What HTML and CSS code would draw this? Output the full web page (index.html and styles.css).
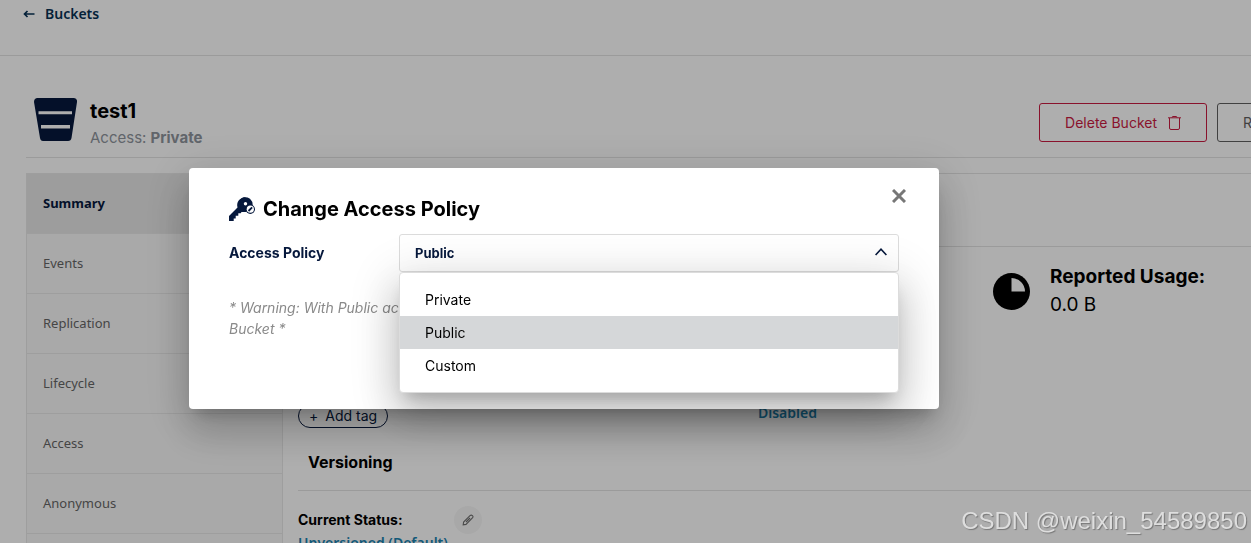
FILE: index.html
```html
<!DOCTYPE html>
<html lang="en">
<head>
  <meta charset="UTF-8" />
  <meta name="viewport" content="width=device-width, initial-scale=1.0" />
  <title>test1 - Buckets</title>
  <link rel="stylesheet" href="styles.css">
</head>
<body>
  <header class="topbar">
    <a class="back-link" href="#">
      <svg width="12" height="8" viewBox="0 0 12 8" fill="none" stroke="currentColor" stroke-width="1.7"><path d="M11.5 4H1.5M4.5 1L1.5 4l3 3"/></svg>
      Buckets
    </a>
  </header>

  <main class="content">
    <div class="bucket-head">
      <svg class="bucket-icon" width="43" height="43" viewBox="0 0 43 43">
        <path fill="#06183c" fill-rule="evenodd" d="M3 0H40Q43.500 .5 43 4L37.500 40Q37 43 34 43H9Q6.500 43 6 40L0 4Q0 .5 3 0ZM4.500 13.300V16.300H38V13.300ZM7 27V30.500H36V27Z"/>
      </svg>
      <div class="bucket-info">
        <h1>test1</h1>
        <p>Access: <strong>Private</strong></p>
      </div>
      <div class="actions">
        <button class="btn btn-danger" type="button">Delete Bucket
          <svg width="13" height="14" viewBox="0 0 13 14" fill="none" stroke="currentColor"><path d="M0 1.800H13M4 1.500Q4 .5 5 .5H8Q9 .5 9 1.500M1.500 2V12Q1.500 13.500 3 13.500H10Q11.500 13.500 11.500 12V2"/></svg>
        </button>
        <button class="btn btn-refresh" type="button">Refresh</button>
      </div>
    </div>

    <div class="layout">
      <nav class="tabs">
        <a class="active" href="#">Summary</a>
        <a href="#">Events</a>
        <a href="#">Replication</a>
        <a href="#">Lifecycle</a>
        <a href="#">Access</a>
        <a href="#">Anonymous</a>
        <a href="#" aria-label="More"></a>
      </nav>

      <section class="panel">
        <div class="panel-title"></div>
        <div class="summary">
          <div class="summary-cell">
            <button class="add-tag" type="button"><span>+</span>Add tag</button>
          </div>
          <div class="summary-cell">
            <a class="value-link" href="#">Disabled</a>
          </div>
          <div class="usage">
            <svg width="37" height="37" viewBox="0 0 37 37"><circle cx="18.500" cy="18.500" r="18.500"/><path fill="#fafafa" d="M18.500 5A13.500 13.500 0 0 1 32 18.500H18.500Z"/></svg>
            <div>
              <h3>Reported Usage:</h3>
              <p>0.0 B</p>
            </div>
          </div>
        </div>
        <h2>Versioning</h2>
        <div class="status">
          <h4>Current Status:</h4>
          <button class="edit" type="button" aria-label="Edit">
            <svg width="12" height="12" viewBox="0 0 12 12" fill="none" stroke="#6b6b6b" stroke-width="1.100"><path d="M1.200 10.800L1.600 8 8 1.600Q9.200 .6 10.400 1.600T10.400 4L4 10.400ZM4 8L8 4"/></svg>
          </button>
        </div>
        <a class="value-link" href="#">Unversioned (Default)</a>
      </section>
    </div>
  </main>

  <div class="overlay">
    <div class="dialog" role="dialog" aria-labelledby="dialog-title">
      <button class="close" type="button" aria-label="Close">
        <svg width="14" height="14" viewBox="0 0 14 14" fill="none" stroke="#777" stroke-width="3"><path d="M1 1l12 12M13 1L1 13"/></svg>
      </button>
      <div class="dialog-title">
        <svg width="26" height="25" viewBox="0 0 26 25">
          <path fill="#06183c" d="M16 .3a7.900 7.900 0 0 0-7.500 10.200L0 19v5h4.700v-2.500h2v-2.800h2.600v-2.500h2.400l.8-1.300A8 8 0 0 0 16 .3z"/>
          <path fill="#06183c" d="M12 1.700Q16-1.200 21 1.700Q24.300 5 23.500 9L17 15H11z"/>
          <circle cx="16.500" cy="6.700" r="1.700" fill="#fff"/>
          <circle cx="21.300" cy="12.200" r="4.700" fill="#06183c"/>
          <circle cx="21.300" cy="12.200" r="3.600" fill="#fff"/>
          <path d="M19.500 14l3.600-3.600" stroke="#06183c" stroke-width="1.800"/>
        </svg>
        <h2 id="dialog-title">Change Access Policy</h2>
      </div>
      <div class="field">
        <label for="policy">Access Policy</label>
        <div class="select-wrap">
          <select id="policy">
            <option>Public</option>
          </select>
          <svg class="chevron" width="12" height="8" viewBox="0 0 12 8" fill="none" stroke="#06183c" stroke-width="1.600"><path d="M.6 7L6 1.200 11.400 7"/></svg>
          <ul class="menu">
            <li>Private</li>
            <li class="selected">Public</li>
            <li>Custom</li>
          </ul>
        </div>
      </div>
      <p class="warning">* Warning: With Public access anyone will be able to upload, download and delete files from this Bucket *</p>
    </div>
  </div>

  <div class="watermark">CSDN @weixin_54589850</div>
</body>
</html>
```
FILE: styles.css
```css
:root {
  --bg: #fafafa;
  --navy: #06183c;
  --line: #dedede;
  --link: #1a80ad;
}
* {
  box-sizing: border-box;
  margin: 0;
  padding: 0;
}
body {
  height: 100vh;
  overflow: hidden;
  background: var(--bg);
  color: #000;
  font-family: 'Inter', sans-serif;
  font-size: 14px;
}
a {
  text-decoration: none;
}
button, select {
  font-family: inherit;
}
svg {
  display: block;
  flex-shrink: 0;
}
.topbar {
  height: 56px;
  padding: 4px 23px;
  border-bottom: 1px solid var(--line);
}
.back-link {
  display: inline-flex;
  align-items: center;
  gap: 10px;
  color: #073052;
  font: 600 14px/20px 'Noto Sans', sans-serif;
}
.content {
  margin-left: 26px;
  margin-right: -94px;
}
.bucket-head {
  display: flex;
  align-items: flex-start;
  height: 102px;
  padding: 41px 0 0 8px;
  border-bottom: 1px solid var(--line);
}
.bucket-icon {
  margin-top: 1px;
}
.bucket-info {
  margin-left: 13px;
}
.bucket-info h1 {
  font-size: 20px;
  line-height: 28px;
}
.bucket-info p {
  color: #8b9199;
  font-size: 15px;
  line-height: 26px;
}
.actions {
  display: flex;
  gap: 10px;
  margin-top: 6px;
  margin-left: auto;
}
.btn {
  display: flex;
  align-items: center;
  gap: 11px;
  height: 39px;
  padding: 0 25px;
  border: 1px solid #5e5e5e;
  border-radius: 3px;
  background: transparent;
  color: #5e5e5e;
  font-size: 14px;
}
.btn-danger {
  border-color: #c51b3f;
  color: #c51b3f;
}
.btn-refresh {
  width: 128px;
}
.layout {
  display: flex;
  margin-top: 15px;
}
.tabs {
  width: 257px;
  flex-shrink: 0;
  background: #f3f3f3;
  border: 1px solid #e3e3e3;
}
.tabs a {
  display: flex;
  align-items: center;
  height: 60px;
  padding: 0 16px 2px;
  border-bottom: 1px solid #e3e3e3;
  color: #646464;
  font-family: 'Noto Sans', sans-serif;
  font-size: 13px;
}
.tabs .active {
  background: #e1e1e1;
  color: var(--navy);
  font-weight: 700;
}
.panel {
  flex: 1;
  padding-left: 15px;
  border-top: 1px solid var(--line);
}
.panel-title {
  height: 73px;
  border-bottom: 1px solid var(--line);
}
.summary {
  display: grid;
  grid-template-columns: 460px 235px 1fr;
  height: 181px;
}
.summary-cell {
  align-self: end;
  display: flex;
  height: 24px;
}
.add-tag {
  display: flex;
  align-items: center;
  gap: 7px;
  height: 24px;
  padding: 0 10px 2px;
  border: 1px solid var(--navy);
  border-radius: 12px;
  background: transparent;
  color: var(--navy);
  font-size: 14px;
}
.value-link {
  color: var(--link);
  font: 600 14px/18px 'Noto Sans', sans-serif;
}
.usage {
  display: flex;
  gap: 20px;
  padding-top: 16px;
}
.usage svg {
  margin-top: 10px;
}
.usage h3, .usage p {
  font-size: 19px;
  line-height: 28px;
}
.panel h2 {
  height: 63px;
  padding: 22px 10px 0;
  border-bottom: 1px solid var(--line);
  font-size: 16px;
  line-height: 24px;
}
.status {
  display: flex;
  align-items: center;
  height: 28px;
  margin-top: 15px;
}
.status h4 {
  width: 156px;
  padding-bottom: 2px;
}
.edit {
  display: flex;
  align-items: center;
  justify-content: center;
  width: 28px;
  height: 28px;
  border: none;
  border-radius: 50%;
  background: #f1f1f1;
}

/* modal */
.overlay {
  position: fixed;
  inset: 0;
  display: flex;
  justify-content: center;
  align-items: flex-start;
  padding: 168px 312px 0 189px;
  background: rgba(0, 0, 0, 0.3);
}
.dialog {
  position: relative;
  width: 100%;
  max-width: 750px;
  padding: 26px 40px 70px;
  background: #fff;
  border-radius: 4px;
  box-shadow: 0 11px 15px -7px rgba(0,0,0,0.2), 0 24px 38px 3px rgba(0,0,0,0.14), 0 9px 46px 8px rgba(0,0,0,0.12);
}
.close {
  position: absolute;
  top: 21px;
  right: 33px;
  border: none;
  background: none;
}
.dialog-title {
  display: flex;
  align-items: center;
  gap: 8px;
  height: 30px;
}
.dialog-title h2 {
  font-size: 20px;
}
.field {
  display: flex;
  align-items: center;
  margin-top: 10px;
}
.field label {
  width: 170px;
  padding-bottom: 2px;
  color: var(--navy);
  font-weight: 700;
}
.select-wrap {
  position: relative;
  flex: 1;
}
.select-wrap select {
  appearance: none;
  display: block;
  width: 100%;
  height: 38px;
  padding: 0 15px;
  border: 1px solid #dcdcdc;
  border-radius: 3px;
  background: #fff;
  color: var(--navy);
  font-size: 13px;
  font-weight: 700;
}
.chevron {
  position: absolute;
  top: 14px;
  right: 12px;
}
.menu {
  position: absolute;
  top: 100%;
  left: 0;
  right: 0;
  padding: 10px 0;
  list-style: none;
  background: #fff;
  border: 1px solid #dcdcdc;
  border-radius: 4px;
  box-shadow: 0 11px 15px -7px rgba(0,0,0,0.2), 0 24px 38px 3px rgba(0,0,0,0.14), 0 9px 46px 8px rgba(0,0,0,0.12);
}
.menu li {
  padding: 0 25px;
  line-height: 33px;
}
.menu .selected {
  background: #d5d7d9;
}
.warning {
  margin-top: 25px;
  color: #8a8a8a;
  font-style: italic;
  line-height: 21px;
}
.watermark {
  position: fixed;
  right: 4px;
  bottom: 8px;
  color: #dedede;
  font: 24px/28px 'Liberation Sans', sans-serif;
  text-shadow: 1px 1px 1px #777;
}
```
